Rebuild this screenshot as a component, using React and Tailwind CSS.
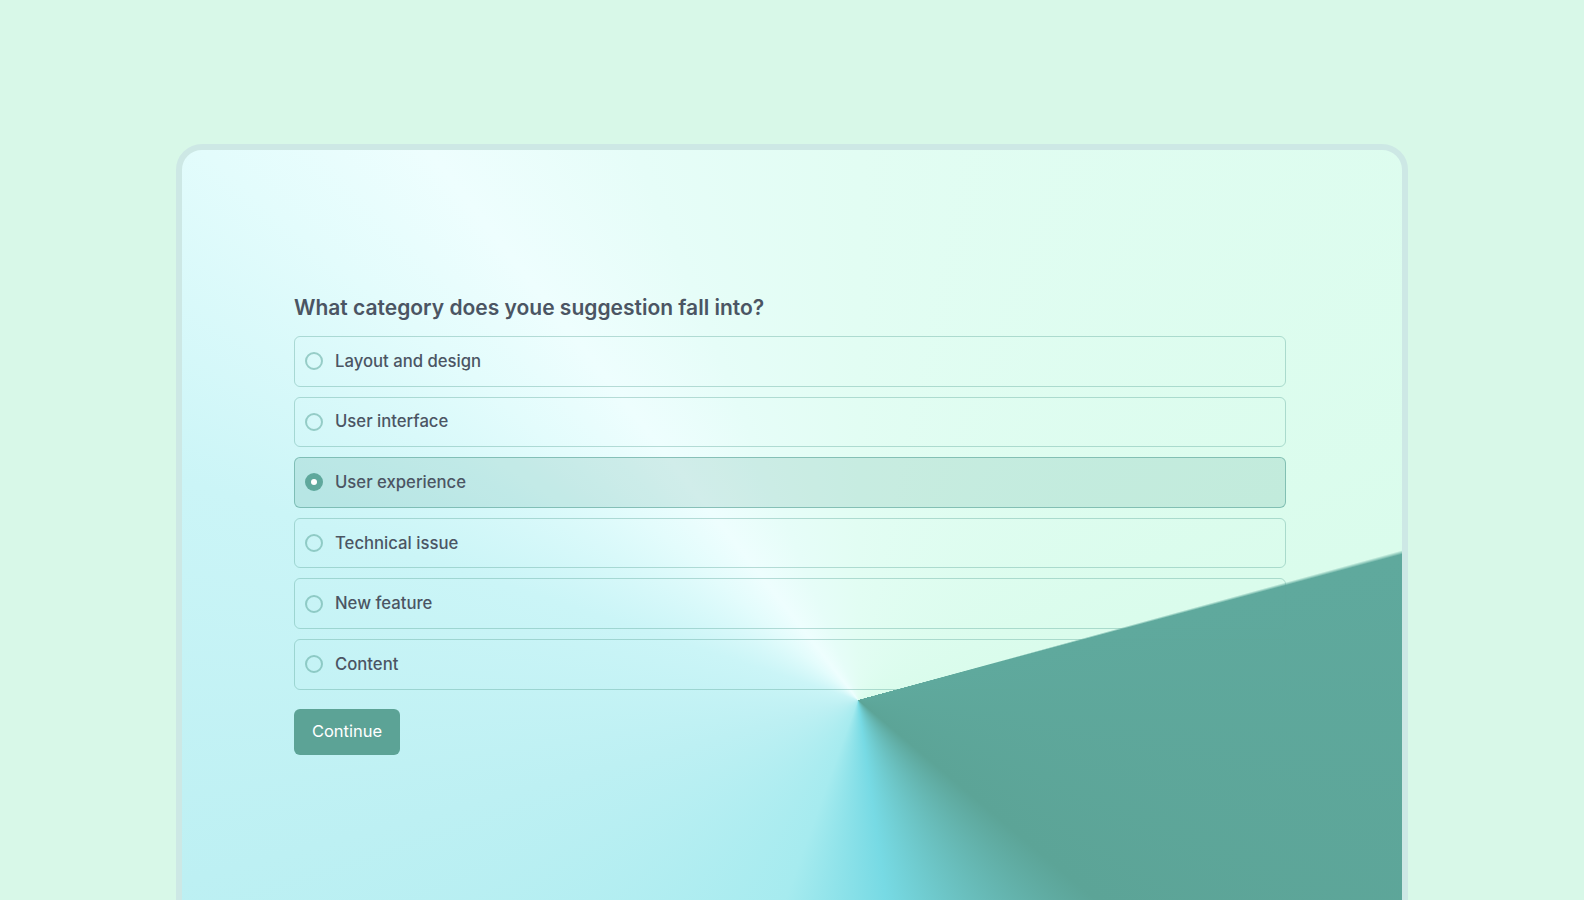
import React, { useState } from 'react';

const options = [
    'Layout and design',
    'User interface',
    'User experience',
    'Technical issue',
    'New feature',
    'Content',
];

const Radio = ({ checked }) =>
    checked ? (
        <span className="flex h-[18px] w-[18px] shrink-0 items-center justify-center rounded-full bg-[#5fa89c]">
            <span className="h-[6px] w-[6px] rounded-full bg-white" />
        </span>
    ) : (
        <span className="h-[18px] w-[18px] shrink-0 rounded-full border-2 border-[#5fa89c]/55" />
    );

export default function App() {
    const [selected, setSelected] = useState('User experience');

    return (
        <div className="h-[900px] overflow-hidden bg-[#d8f8e8] pt-[144px] font-['Inter',sans-serif]">
            {/* card */}
            <div className="mx-auto h-[820px] w-[1232px] rounded-t-[26px] border-[6px] border-[#cde8e5] bg-[conic-gradient(from_0deg_at_676px_550px,#e2fdf3_0deg,#dafcec_74.6deg,#5fa99d_75deg,#5ca497_130deg,#77dae4_172deg,#a6ebef_200deg,#bdf0f3_255deg,#cbf5f7_288deg,#e3fcfc_310deg,#eefefe_322deg,#e6fdf8_338deg,#e2fdf3_360deg)]">
                <div className="ml-[112px] w-[992px] pt-[144px]">
                    <h1 className="mb-[14px] text-[21px] font-semibold leading-7 text-[#4b5563]">
                        What category does youe suggestion fall into?
                    </h1>

                    <div className="flex flex-col gap-[10px]">
                        {options.map(opt => {
                            const checked = opt === selected;
                            return (
                                <button
                                    key={opt}
                                    onClick={() => setSelected(opt)}
                                    className={`flex h-[50.6px] items-center gap-3 rounded-md border px-[10px] text-left ${
                                        checked
                                            ? 'border-[#5fa89c]/65 bg-[#5fa89c]/20'
                                            : 'border-[#5fa89c]/40'
                                    }`}
                                >
                                    <Radio checked={checked} />
                                    <span className="text-[16.7px] font-medium text-[#4b5563]">{opt}</span>
                                </button>
                            );
                        })}
                    </div>

                    <button className="mt-[19px] h-[46px] w-[106px] rounded-md bg-[#5ca396] text-[16.5px] text-white">
                        Continue
                    </button>
                </div>
            </div>
        </div>
    );
}
